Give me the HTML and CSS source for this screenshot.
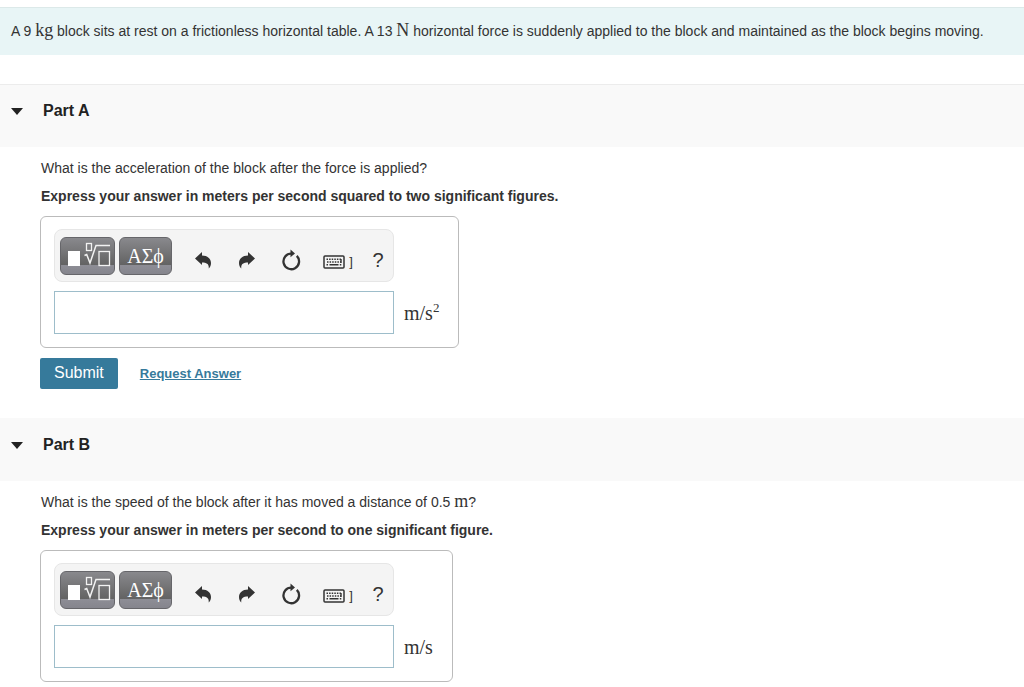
FILE: index.html
```html
<!DOCTYPE html>
<html lang="en">
<head>
  <meta charset="UTF-8">
  <title>Block on a frictionless table</title>
  <link rel="stylesheet" href="styles.css">
</head>
<body>
  <!-- shared toolbar icons -->
  <svg class="icon-defs" aria-hidden="true">
    <symbol id="icon-template" viewBox="0 0 55 38">
      <rect x="8" y="14" width="12" height="15" fill="#fff"/>
      <g fill="none" stroke="#f2f2f2">
        <rect x="26.5" y="6.500" width="5" height="7" stroke-width="1.3"/>
        <path d="M24.5 18.500l2.200-1 3.300 8.500L36 8.500h14" stroke-width="1.5"/>
        <rect x="39" y="14.500" width="10.500" height="14" stroke-width="1.3"/>
      </g>
    </symbol>
    <symbol id="icon-undo" viewBox="0 0 16 18">
      <path d="M0 7.5L7 1v3.500c5.500 0 9 3.200 9 7.500 0 2.400-.9 4.200-2.300 5.500.5-4.300-1.700-6-6.700-6V14z" fill="#333"/>
    </symbol>
    <symbol id="icon-reset" viewBox="0 0 20 22">
      <path d="M15.800 6.900A7.800 7.800 0 1 1 10.500 4.600" fill="none" stroke="#333" stroke-width="2.3"/>
      <path d="M9.500 .5l4.500 3.900-4.500 3.900z" fill="#333"/>
    </symbol>
    <symbol id="icon-keyboard" viewBox="0 0 22 14">
      <rect x="1" y="1" width="20" height="12" rx="1" fill="none" stroke="#333" stroke-width="1.5"/>
      <g fill="none" stroke="#333" stroke-width="1.4">
        <path d="M3.500 4.300h15" stroke-dasharray="1.5 1.1"/>
        <path d="M4 7h14" stroke-dasharray="1.5 1.1"/>
        <path d="M3.500 9.800h1.500M6.500 9.800h9M16.800 9.800h1.500M18 4v4"/>
      </g>
    </symbol>
  </svg>

  <header class="intro">
    A 9 <span class="math">kg</span> block sits at rest on a frictionless horizontal table. A 13 <span class="math">N</span> horizontal force is suddenly applied to the block and maintained as the block begins moving.
  </header>

  <main>
    <section class="part">
      <h2 class="part-header"><button class="part-toggle" type="button" aria-expanded="true">Part A</button></h2>
      <div class="part-body">
        <p class="question">What is the acceleration of the block after the force is applied?</p>
        <p class="instructions"><label for="answer-a">Express your answer in meters per second squared to two significant figures.</label></p>
        <div class="answer-box">
          <div class="toolbar">
            <button class="tool-key" type="button" aria-label="Templates"><svg class="template-icon"><use href="#icon-template"/></svg></button>
            <button class="tool-key" type="button">ΑΣϕ</button>
            <div class="tool-icons">
              <button class="tool" type="button" aria-label="Undo"><svg class="arrow"><use href="#icon-undo"/></svg></button>
              <button class="tool" type="button" aria-label="Redo"><svg class="arrow redo"><use href="#icon-undo"/></svg></button>
              <button class="tool" type="button" aria-label="Reset"><svg class="reset"><use href="#icon-reset"/></svg></button>
              <button class="tool tool-wide" type="button" aria-label="Keyboard shortcuts"><svg class="keyboard"><use href="#icon-keyboard"/></svg><span class="bracket">]</span></button>
              <button class="tool tool-help" type="button" aria-label="Help">?</button>
            </div>
          </div>
          <div class="answer-row">
            <input class="answer-input" id="answer-a" type="text">
            <span class="unit">m/s<sup>2</sup></span>
          </div>
        </div>
        <div class="actions">
          <button class="submit" type="button">Submit</button>
          <a class="request" href="#">Request Answer</a>
        </div>
      </div>
    </section>

    <section class="part">
      <h2 class="part-header"><button class="part-toggle" type="button" aria-expanded="true">Part B</button></h2>
      <div class="part-body">
        <p class="question">What is the speed of the block after it has moved a distance of 0.5 <span class="math">m</span>?</p>
        <p class="instructions"><label for="answer-b">Express your answer in meters per second to one significant figure.</label></p>
        <div class="answer-box">
          <div class="toolbar">
            <button class="tool-key" type="button" aria-label="Templates"><svg class="template-icon"><use href="#icon-template"/></svg></button>
            <button class="tool-key" type="button">ΑΣϕ</button>
            <div class="tool-icons">
              <button class="tool" type="button" aria-label="Undo"><svg class="arrow"><use href="#icon-undo"/></svg></button>
              <button class="tool" type="button" aria-label="Redo"><svg class="arrow redo"><use href="#icon-undo"/></svg></button>
              <button class="tool" type="button" aria-label="Reset"><svg class="reset"><use href="#icon-reset"/></svg></button>
              <button class="tool tool-wide" type="button" aria-label="Keyboard shortcuts"><svg class="keyboard"><use href="#icon-keyboard"/></svg><span class="bracket">]</span></button>
              <button class="tool tool-help" type="button" aria-label="Help">?</button>
            </div>
          </div>
          <div class="answer-row">
            <input class="answer-input" id="answer-b" type="text">
            <span class="unit">m/s</span>
          </div>
        </div>
      </div>
    </section>
  </main>
</body>
</html>
```
FILE: styles.css
```css
* { box-sizing: border-box; }
body { margin: 0; padding-top: 7px; background: #fff; color: #333; font: 14px/20px "Liberation Sans", Arial, sans-serif; }
button { padding: 0; border: 0; background: none; color: inherit; font: inherit; cursor: pointer; }
.icon-defs { display: none; }
.math { font-family: "Liberation Serif", serif; font-size: 18px; line-height: 16px; }

.intro { padding: 13px 0 14px 11px; border-top: 1px solid #dce9e9; background: #e8f5f6; }

.part-header { margin: 0; border-top: 1px solid #ececec; background: #f9f9f9; font-size: 16px; line-height: 20px; }
.part + .part .part-header { border-top-color: #f9f9f9; }
.intro + main { margin-top: 29px; }
.part-toggle { display: flex; align-items: center; gap: 20px; width: 100%; padding: 16px 11px 26px; color: #222; }
.part-toggle::before { content: ""; border: 6px solid transparent; border-top: 7px solid #222; border-bottom: 0; }
.part-body { padding: 11px 40px 29px; }
.question, .instructions { margin: 0 0 8px; padding-left: 1px; }
.instructions { margin-bottom: 10px; font-weight: bold; }

.answer-box { width: fit-content; padding: 12px 19px 13px 13px; border: 1px solid #bbb; border-radius: 6px; }
.toolbar { display: flex; align-items: center; gap: 4px; width: 340px; height: 53px; padding-left: 5px; border: 1px solid #e6e6e6; border-radius: 8px; background: #f4f4f4; }
.tool-key { width: 55px; height: 38px; border: 1px solid #66666a; border-radius: 6px; background: linear-gradient(#89898d, #636363 74%, #8e8e96 74%, #85858d); color: #fff; font: 20px/32px "Liberation Serif", serif; }
.template-icon { display: block; width: 55px; height: 38px; margin: -1px; }
.tool-icons { display: flex; flex: 1; margin: 9px 0 0 5px; }
.tool { display: flex; align-items: center; justify-content: center; width: 44px; height: 24px; color: #333; }
.arrow { width: 16px; height: 18px; }
.redo { transform: scaleX(-1); }
.reset { width: 20px; height: 22px; }
.tool-wide { gap: 4px; width: 50px; }
.keyboard { width: 22px; height: 14px; margin-top: 4px; }
.bracket { margin-top: 4px; font: 13px/14px "Liberation Sans", Arial, sans-serif; }
.tool-help { width: 30px; font-size: 20px; }
.answer-row { display: flex; align-items: center; gap: 10px; margin-top: 9px; }
.answer-input { width: 340px; height: 43px; padding: 8px; border: 1px solid #9dbdca; background: #fff; font-size: 16px; }
.unit { font: 20px/20px "Liberation Serif", serif; }
.unit sup { font-size: 13px; line-height: 0; }

.actions { display: flex; align-items: center; gap: 22px; margin-top: 10px; }
.submit { padding: 5px 14px 6px; border-radius: 2px; background: #367a9b; color: #fff; font-size: 16px; }
.request { color: #367a9b; font-size: 13px; font-weight: bold; }
```
